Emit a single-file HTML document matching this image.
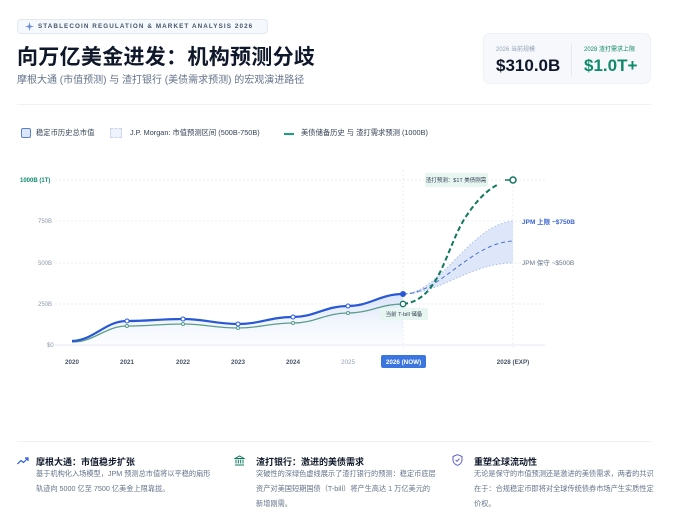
<!DOCTYPE html>
<html><head><meta charset="utf-8"><style>
*{margin:0;padding:0;box-sizing:border-box}
body{width:680px;height:524px;background:#fff;font-family:"Liberation Sans","Noto Sans CJK SC",sans-serif;color:#0f172a;position:relative;overflow:hidden}
.abs{position:absolute}
.badge{left:17px;top:19px;width:251px;height:15px;border:1px solid #e2e8f0;background:#f5f8fc;border-radius:4px;font-size:6.3px;font-weight:bold;letter-spacing:1.1px;color:#475569;line-height:13px;padding-left:20px;white-space:nowrap}
h1{position:absolute;left:17px;top:41px;font-size:21px;font-weight:bold;letter-spacing:.3px;color:#0f172a;white-space:nowrap}
.sub{left:17px;top:71px;font-size:10px;color:#64748b;white-space:nowrap}
.card{left:483px;top:33px;width:168px;height:51px;background:#f6f8fb;border-radius:7px;border:1px solid #eef1f5}
.lab{font-size:6px}
.hr{left:17px;width:634px;height:1px;background:#eef1f5}
.leg{top:128px;font-size:7.3px;color:#334155;white-space:nowrap}
.ct{font-size:9px;font-weight:bold;color:#0f172a}
.cb{font-size:7.2px;color:#64748b;line-height:15px;white-space:nowrap}
</style></head><body>
<div class="abs badge">STABLECOIN REGULATION &amp; MARKET ANALYSIS 2026</div>
<svg class="abs" style="left:25px;top:22px" width="9" height="9" viewBox="0 0 10 10"><path d="M5 0 L6 4 L10 5 L6 6 L5 10 L4 6 L0 5 L4 4Z" fill="#6b8bd6"/></svg>
<h1>向万亿美金进发：机构预测分歧</h1>
<div class="abs sub">摩根大通 (市值预测) 与 渣打银行 (美债需求预测) 的宏观演进路径</div>
<div class="abs card">
 <div class="abs lab" style="left:12px;top:10px;color:#94a3b8">2026 当前规模</div>
 <div class="abs" style="left:12px;top:22px;font-size:17px;font-weight:bold;color:#0f172a">$310.0B</div>
 <div class="abs" style="left:87px;top:10px;width:1px;height:32px;background:#e2e8f0"></div>
 <div class="abs lab" style="left:100px;top:10px;color:#0f8a6a">2028 渣打需求上限</div>
 <div class="abs" style="left:100px;top:22px;font-size:17px;font-weight:bold;color:#0f8a6a">$1.0T+</div>
</div>
<div class="abs hr" style="top:104px"></div>
<div class="abs" style="left:21px;top:128px;width:10px;height:10px;border:1px solid #5b7fd6;background:#dbe6fb;border-radius:2px"></div>
<div class="abs leg" style="left:36px">稳定币历史总市值</div>
<div class="abs" style="left:110px;top:128px;width:12px;height:10px;border:1px dashed #c7d4ee;background:#edf2fc"></div>
<div class="abs leg" style="left:130px">J.P. Morgan: 市值预测区间 (500B-750B)</div>
<div class="abs" style="left:284px;top:133px;width:10px;height:2px;background:#15a37f"></div>
<div class="abs leg" style="left:301px">美债储备历史 与 渣打需求预测 (1000B)</div>

<svg class="abs" style="left:0;top:160px" width="680" height="220" viewBox="0 160 680 220">
<defs><linearGradient id="g" x1="0" y1="0" x2="0" y2="1"><stop offset="0" stop-color="#c9d8f7" stop-opacity=".7"/><stop offset="1" stop-color="#eef3fd" stop-opacity=".2"/></linearGradient></defs>
<g stroke="#e8edf3" stroke-width="1" stroke-dasharray="2 2">
<line x1="55" y1="180" x2="545" y2="180"/><line x1="55" y1="221" x2="545" y2="221"/><line x1="55" y1="263" x2="545" y2="263"/><line x1="55" y1="304" x2="545" y2="304"/>
<line x1="403" y1="170" x2="403" y2="350"/><line x1="513" y1="170" x2="513" y2="350"/></g>
<line x1="55" y1="345" x2="545" y2="345" stroke="#e5e9ef"/>
<g font-size="6" fill="#8b98aa" font-family="Liberation Sans,sans-serif">
<text x="20" y="182" fill="#0f8a6a" font-weight="bold">1000B (1T)</text><text x="38" y="223">750B</text><text x="38" y="265">500B</text><text x="38" y="306">250B</text><text x="47" y="347">$0</text></g>
<path d="M72,341 C95,340 105,321 127,321 C150,321 160,319 183,319 C205,319 215,324 238,324 C260,324 270,317 293,317 C315,317 325,306 348,306 C370,306 380,294 403,294 L403,345 L72,345Z" fill="url(#g)"/>
<path d="M403,294 C440,294 470,225 513,221 L513,263 C470,263 440,294 403,294Z" fill="#d5e1f8" opacity=".8"/>
<path d="M403,294 C440,294 470,225 513,221" fill="none" stroke="#a9bfe9" stroke-dasharray="1.5 2"/>
<path d="M403,294 C440,294 470,263 513,263" fill="none" stroke="#a9bfe9" stroke-dasharray="1.5 2"/>
<path d="M403,294 C440,294 470,243 513,241" fill="none" stroke="#4a6fd0" stroke-dasharray="4 3"/>
<path d="M72,342 C95,342 105,326 127,326 C150,326 160,324 183,324 C205,324 215,328 238,328 C260,328 270,323 293,323 C315,323 325,313 348,313 C370,313 380,304 403,304" fill="none" stroke="#5c9c8c" stroke-width="1.3"/>
<path d="M72,341 C95,340 105,321 127,321 C150,321 160,319 183,319 C205,319 215,324 238,324 C260,324 270,317 293,317 C315,317 325,306 348,306 C370,306 380,294 403,294" fill="none" stroke="#2858d6" stroke-width="2.2"/>
<path d="M403,304 C440,300 445,250 465,218 C478,198 488,190 497,185" fill="none" stroke="#12795d" stroke-width="2" stroke-dasharray="5 3"/>
<line x1="505" y1="180" x2="510" y2="180" stroke="#12795d" stroke-width="1.5"/>
<g fill="#fff" stroke="#5c9c8c" stroke-width="1"><circle cx="127" cy="326" r="1.5"/><circle cx="183" cy="324" r="1.5"/><circle cx="238" cy="328" r="1.5"/><circle cx="293" cy="323" r="1.5"/><circle cx="348" cy="313" r="1.5"/></g>
<g fill="#fff" stroke="#2858d6" stroke-width="1"><circle cx="127" cy="321" r="2"/><circle cx="183" cy="319" r="2"/><circle cx="238" cy="324" r="2"/><circle cx="293" cy="317" r="2"/><circle cx="348" cy="306" r="2"/></g>
<circle cx="403" cy="294" r="3" fill="#2858d6"/>
<circle cx="403" cy="304" r="2.7" fill="#fff" stroke="#12795d" stroke-width="1.3"/>
<circle cx="513" cy="180" r="3" fill="#fff" stroke="#12795d" stroke-width="1.5"/>
<rect x="425" y="173" width="63" height="14" rx="2" fill="#e8f6f1"/>
<text x="456" y="182" font-size="5.5" fill="#334155" text-anchor="middle">渣打预测：$1T 美债刚需</text>
<rect x="380" y="308" width="48" height="12" rx="2" fill="#e8f6f1"/>
<text x="404" y="316" font-size="5.5" fill="#334155" text-anchor="middle">当前 T-bill 储备</text>
<text x="522" y="224" font-size="6.5" font-weight="bold" fill="#3b63d4">JPM 上限 ~$750B</text>
<text x="522" y="265" font-size="6.5" fill="#64748b">JPM 保守 ~$500B</text>
<g font-size="6.3" font-weight="bold" fill="#475569" text-anchor="middle">
<text x="72" y="364">2020</text><text x="127" y="364">2021</text><text x="183" y="364">2022</text><text x="238" y="364">2023</text><text x="293" y="364">2024</text><text x="348" y="364" fill="#94a3b8" font-weight="normal">2025</text><text x="513" y="364">2028 (EXP)</text></g>
<rect x="381" y="355" width="45" height="13" rx="2" fill="#3b76e0"/>
<text x="403.5" y="364" font-size="6.3" font-weight="bold" fill="#fff" text-anchor="middle">2026 (NOW)</text>
</svg>

<div class="abs hr" style="top:441px"></div>
<svg class="abs" style="left:17px;top:457px" width="12" height="8" viewBox="0 0 12 8"><path d="M0.5 7 L4 3.5 L6.5 5.5 L11 1 M8 1 H11 V4" fill="none" stroke="#2858d6" stroke-width="1.2"/></svg>
<div class="abs ct" style="left:36px;top:455px">摩根大通：市值稳步扩张</div>
<div class="abs cb" style="left:36px;top:466px">基于机构化入场模型，JPM 预测总市值将以平稳的扇形<br>轨迹向 5000 亿至 7500 亿美金上限靠拢。</div>
<svg class="abs" style="left:234px;top:455px" width="11" height="11" viewBox="0 0 11 11"><path d="M1 3.5 L5.5 1 L10 3.5 Z M2 4.5 V8.5 M4.3 4.5 V8.5 M6.7 4.5 V8.5 M9 4.5 V8.5 M1 10 H10" fill="none" stroke="#12795d" stroke-width="1"/></svg>
<div class="abs ct" style="left:256px;top:455px">渣打银行：激进的美债需求</div>
<div class="abs cb" style="left:256px;top:466px">突破性的深绿色虚线展示了渣打银行的预测：稳定币底层<br>资产对美国短期国债（T-bill）将产生高达 1 万亿美元的<br>新增刚需。</div>
<svg class="abs" style="left:452px;top:454px" width="11" height="12" viewBox="0 0 11 12"><path d="M5.5 0.7 L10 2.5 V6 C10 8.5 8 10.5 5.5 11.3 C3 10.5 1 8.5 1 6 V2.5 Z" fill="none" stroke="#5b5fc7" stroke-width="1"/><path d="M3.6 6 L5 7.3 L7.5 4.6" fill="none" stroke="#5b5fc7" stroke-width="1"/></svg>
<div class="abs ct" style="left:474px;top:455px">重塑全球流动性</div>
<div class="abs cb" style="left:474px;top:466px">无论是保守的市值预测还是激进的美债需求，两者的共识<br>在于：合规稳定币即将对全球传统债券市场产生实质性定<br>价权。</div>
</body></html>
